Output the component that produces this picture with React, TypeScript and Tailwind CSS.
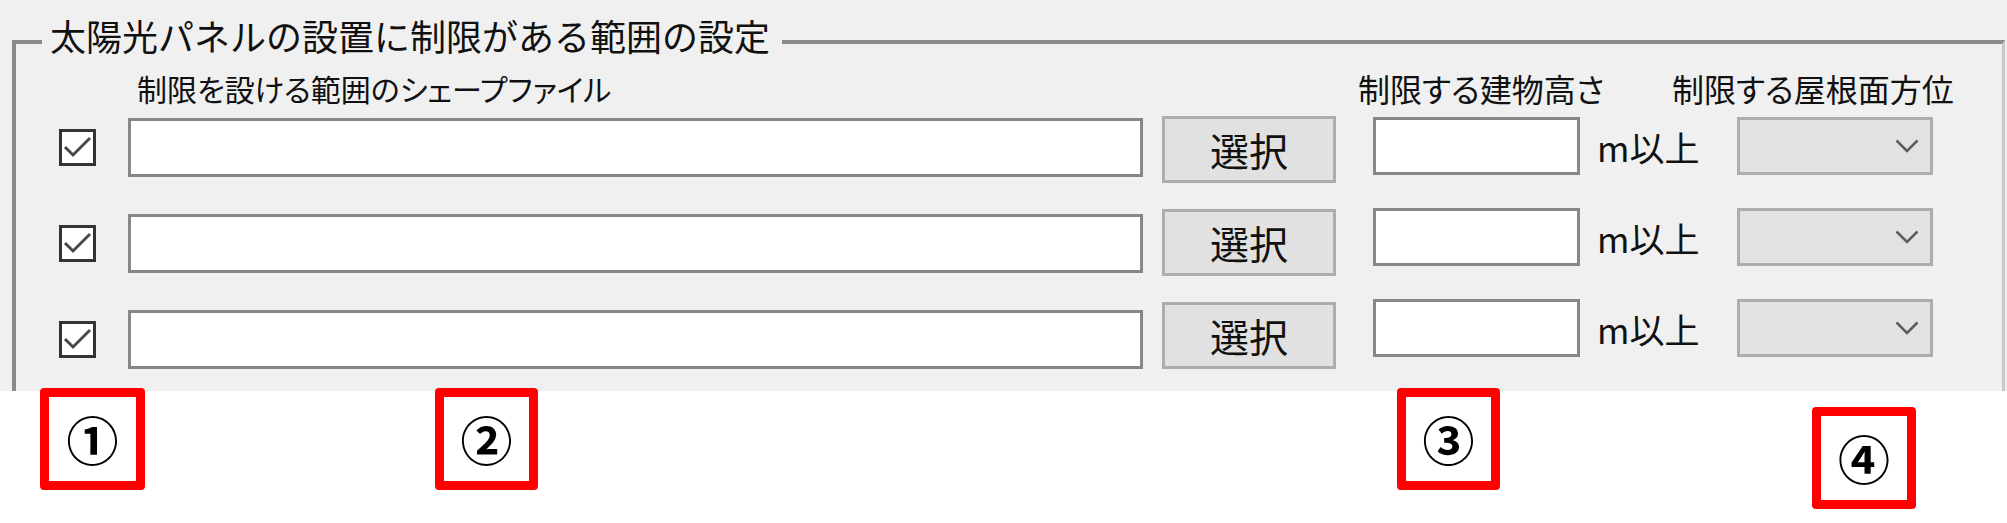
import React from 'react'

// 制限範囲の行（3行とも同じ構成）
const ROWS = [0, 1, 2]

const MARKERS = [
  { label: '①', className: 'ml-[40px] w-[105px]' },
  { label: '②', className: 'ml-[290px] w-[103px]' },
  { label: '③', className: 'ml-[859px] w-[103px]' },
  { label: '④', className: 'ml-[312px] w-[104px] mt-[19px]' },
]

const CheckBox: React.FC = () => (
  <div className="w-[37px] h-[37px] border-[3px] border-[#333333] bg-white flex-shrink-0">
    <svg width="31" height="31" viewBox="0 0 31 31">
      <polyline points="3,15 11,23 28,6" fill="none" stroke="#4a4a4a" strokeWidth="3" />
    </svg>
  </div>
)

const Chevron: React.FC = () => (
  <svg width="24" height="14" viewBox="0 0 24 14">
    <polyline points="1.5,1.5 12,12 22.5,1.5" fill="none" stroke="#5c5c5c" strokeWidth="2.5" />
  </svg>
)

export default function App() {
  return (
    <div className="w-[2007px] h-[523px] bg-white font-['Noto_Sans_CJK_JP',sans-serif] text-[#111111] overflow-hidden">
      {/* グループボックス領域 */}
      <div className="h-[391px] bg-[#f0f0f0] overflow-hidden pt-[20px]">
        <fieldset className="ml-[12px] w-[1993px] h-[420px] border-l-[4px] border-t-[4px] border-r-[3px] border-b-0 border-l-[#8a8a8a] border-t-[#8a8a8a] border-r-[#c8c8c8]">
          <legend className="ml-[26px] pl-[8px] pr-[12px] pb-[14px] text-[36px] leading-[30px]">
            太陽光パネルの設置に制限がある範囲の設定
          </legend>

          {/* 見出し */}
          <div className="mt-[9px] flex h-[30px] leading-[30px] whitespace-nowrap [font-feature-settings:'palt']">
            <div className="ml-[121px] w-[1221px] text-[30px]">制限を設ける範囲のシェープファイル</div>
            <div className="w-[314px] text-[32px]">制限する建物高さ</div>
            <div className="text-[32px]">制限する屋根面方位</div>
          </div>

          <div className="flex items-start">
            {/* ① チェック + ② ファイルパス */}
            <div className="mt-[15px] flex flex-col gap-[37px]">
              {ROWS.map((r) => (
                <div key={r} className="flex items-center h-[59px]">
                  <div className="ml-[43px]">
                    <CheckBox />
                  </div>
                  <div className="ml-[32px] w-[1015px] h-[59px] border-[3px] border-[#878787] bg-white" />
                </div>
              ))}
            </div>

            {/* 選択ボタン */}
            <div className="mt-[13px] ml-[19px] flex flex-col gap-[26px]">
              {ROWS.map((r) => (
                <button
                  key={r}
                  className="w-[174px] h-[67px] border-[3px] border-[#adadad] bg-[#e1e1e1] flex items-center justify-center text-[39px] leading-none"
                >
                  選択
                </button>
              ))}
            </div>

            {/* ③ 高さ + ④ 方位 */}
            <div className="mt-[14px] ml-[37px] flex flex-col gap-[33px]">
              {ROWS.map((r) => (
                <div key={r} className="flex items-center h-[58px]">
                  <div className="w-[207px] h-[58px] border-[3px] border-[#878787] bg-white" />
                  <div className="ml-[17px] w-[140px] text-[35px] leading-none whitespace-nowrap">m以上</div>
                  <div className="w-[196px] h-[58px] border-[3px] border-[#adadad] bg-[#e2e2e2] flex items-center justify-end pr-[11px]">
                    <Chevron />
                  </div>
                </div>
              ))}
            </div>
          </div>
        </fieldset>
      </div>

      {/* 番号の注記 */}
      <div className="-mt-[3px] flex items-start">
        {MARKERS.map((m) => (
          <div
            key={m.label}
            className={`${m.className} h-[102px] border-[9px] border-[#ff0000] rounded-[4px] bg-white flex items-center justify-center`}
          >
            <span className="text-[52px] leading-none font-bold text-black">{m.label}</span>
          </div>
        ))}
      </div>
    </div>
  )
}
